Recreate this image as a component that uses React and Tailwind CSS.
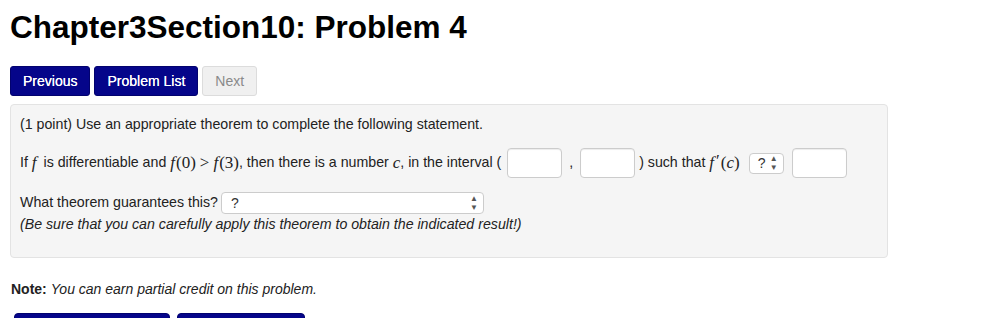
import React from "react";

const SANS = "font-['Helvetica','Liberation_Sans',Arial,sans-serif]";
const SERIF = "font-['Liberation_Serif','Times_New_Roman',serif]";

function Box({ className = "" }) {
  return (
    <span className={`inline-block h-[30px] w-[55px] bg-white border border-[#cccccc] rounded-[4px] shadow-[inset_0_1px_1px_rgba(0,0,0,0.075)] ${className}`} />
  );
}

function Arrows() {
  return (
    <span className="flex flex-col items-center leading-none text-[#555] text-[8px] gap-[1px]">
      <span>▲</span>
      <span>▼</span>
    </span>
  );
}

function M({ children, italic, className = "" }) {
  return <span className={`${SERIF} text-[17px] ${italic ? "italic" : ""} ${className}`}>{children}</span>;
}

export default function App() {
  return (
    <div className={`${SANS} text-[#222] bg-white w-[982px] h-[318px] overflow-hidden px-[10px] pt-[10px]`}>
      {/* Title */}
      <h1 className="text-[31.5px] leading-[34px] font-bold text-black">
        Chapter3Section10: Problem 4
      </h1>

      {/* Nav buttons */}
      <div className="flex gap-[4px] mt-[22px]">
        <button className="h-[30px] px-[12px] rounded-[3px] bg-[#05058a] text-white text-[14px] border border-[#02026e] [text-shadow:0_0_0.4px_#fff]">Previous</button>
        <button className="h-[30px] px-[12px] rounded-[3px] bg-[#05058a] text-white text-[14px] border border-[#02026e] [text-shadow:0_0_0.4px_#fff]">Problem List</button>
        <button className="h-[30px] px-[12px] rounded-[3px] bg-[#f0f0f0] text-[#8a8a8a] text-[14px] border border-[#dcdcdc]">Next</button>
      </div>

      {/* Problem panel */}
      <div className="mt-[8px] w-[878px] h-[154px] bg-[#f5f5f5] border border-[#e3e3e3] rounded-[4px] pl-[9px] pt-[10px] text-[14.2px]">
        <div className="h-[20px] flex items-center">
          (1 point) Use an appropriate theorem to complete the following statement.
        </div>

        <div className="h-[30px] mt-[13px] flex items-center whitespace-pre">
          <span>If </span>
          <M italic className="pr-[3px]">f</M>
          <span> is differentiable and </span>
          <M italic className="pr-[1px]">f</M>
          <M>(0)</M>
          <M className="mx-[4px]">&gt;</M>
          <M italic className="pr-[1px]">f</M>
          <M>(3)</M>
          <span>, then there is a number </span>
          <M italic>c</M>
          <span>, in the interval (</span>
          <Box className="ml-[6px]" />
          <span className="mx-[7px]">,</span>
          <Box />
          <span> ) such that </span>
          <M italic className="pr-[2px]">f</M>
          <M className="relative -top-[2px] pr-[1px]">′</M>
          <M>(</M>
          <M italic>c</M>
          <M>)</M>
          <span className="ml-[9px] h-[21px] w-[35px] bg-white border border-[#cccccc] rounded-[4px] flex items-center justify-between pl-[8px] pr-[5px]">
            <span className="text-[14px] text-[#333]">?</span>
            <Arrows />
          </span>
          <Box className="ml-[8px]" />
        </div>

        <div className="h-[22px] mt-[14px] flex items-center">
          <span>What theorem guarantees this?</span>
          <span className="ml-[3px] h-[22px] w-[263px] bg-white border border-[#cccccc] rounded-[4px] flex items-center justify-between pl-[9px] pr-[5px]">
            <span className="text-[14px] text-[#333]">?</span>
            <Arrows />
          </span>
        </div>

        <div className="h-[18px] mt-[2px] flex items-center italic">
          (Be sure that you can carefully apply this theorem to obtain the indicated result!)
        </div>
      </div>

      {/* Note */}
      <div className="mt-[22px] h-[18px] flex items-center text-[14px] pl-[1px]">
        <span className="font-bold mr-[4px]">Note:</span>
        <span className="italic">You can earn partial credit on this problem.</span>
      </div>

      {/* Submit buttons (cut off) */}
      <div className="flex gap-[7px] mt-[15px] pl-[4px]">
        <span className="block h-[30px] w-[156px] rounded-[4px] bg-[#05058a] border border-[#02026e]" />
        <span className="block h-[30px] w-[128px] rounded-[4px] bg-[#05058a] border border-[#02026e]" />
      </div>
    </div>
  );
}
